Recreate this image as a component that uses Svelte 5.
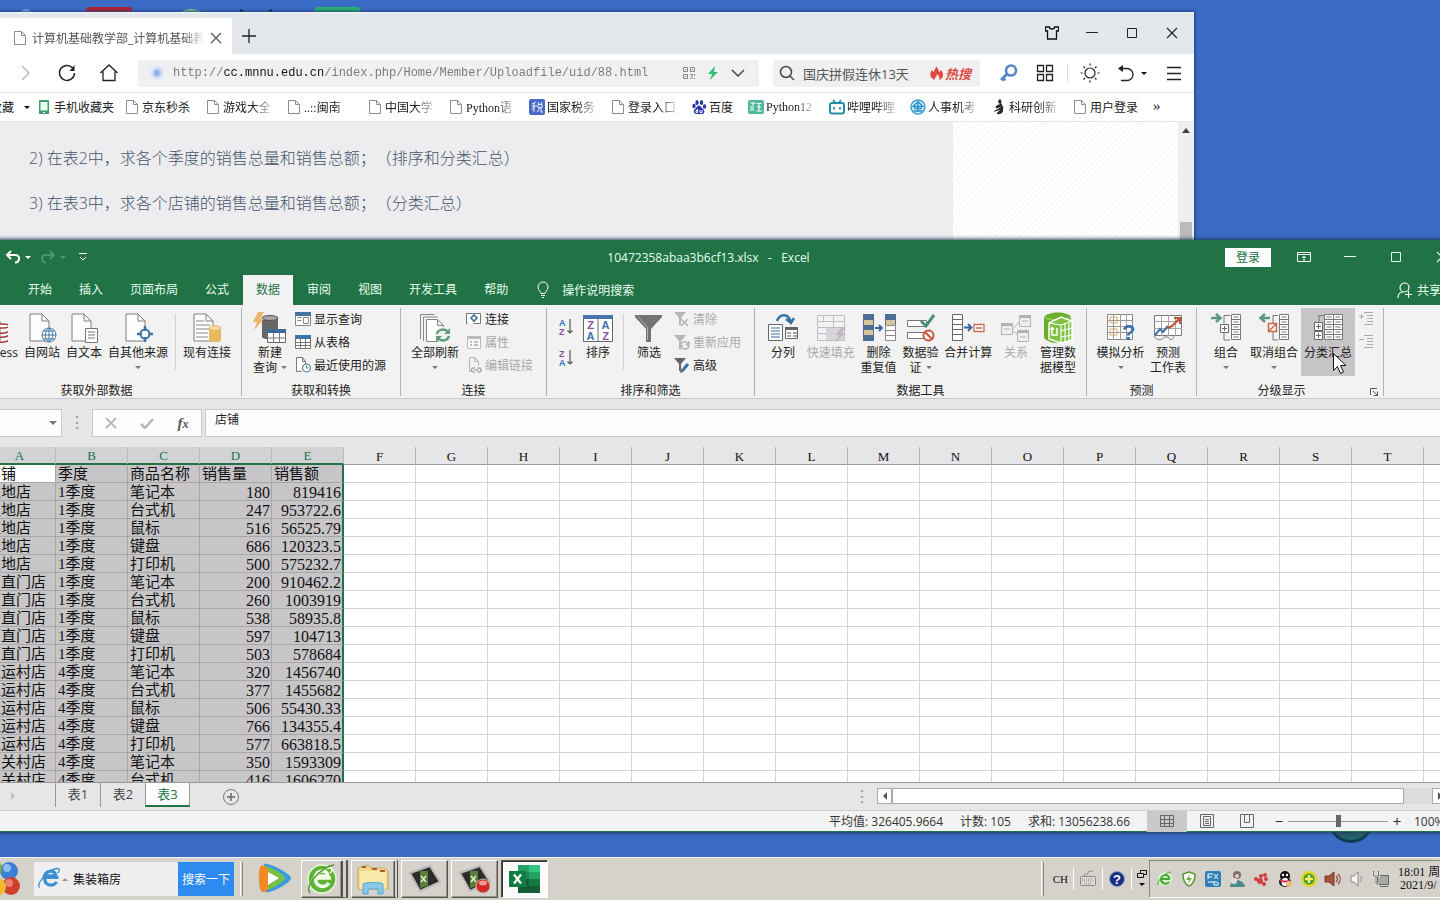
<script lang="ts">
  type Icon = { w: number; h: number; body: string };
  type Big = { icon: string; lines: string[]; drop?: boolean; off?: boolean; active?: boolean };
  type Small = { icon: string; label: string; off?: boolean };

  const page = (x = 0) =>
    `<path d="M${x + 1} 1h12l7 7v20h-19z" fill="#fdfdfd" stroke="#7f7f7f"/><path d="M${x + 13} 1v7h7" fill="none" stroke="#7f7f7f"/>`;
  const gridRows = (x: number) =>
    `<path d="M${x} 1.500h9v25h-9zM${x} 6.500h9M${x} 11.500h9M${x} 16.500h9M${x} 21.500h9" fill="#fff" stroke="#777"/><path d="M${x + 2} 4h5M${x + 2} 9h5M${x + 2} 14h5M${x + 2} 19h5M${x + 2} 24h5" stroke="#777"/>`;
  const ballE = (c: string) =>
    `<path d="M25 15H9c1-9 13-9 13-2H10M23 20c-4 6-15 4-13-6" fill="none" stroke="${c}" stroke-width="3.500"/><path d="M4 26C0 22 14 5 24 5c3 0 2 4 0 5" fill="none" stroke="${c}" stroke-width="1.500"/>`;

  const icons: Record<string, Icon> = {
    doc: { w: 16, h: 16, body: '<path d="M2.500 1.500h7l4 4v9h-11zM9.500 1.500v4h4" fill="#fff" stroke="#8d8d8d"/>' },
    phone: { w: 16, h: 16, body: '<rect x="3" y="1" width="10" height="14" rx="1" fill="#3f9d6b"/><path d="M4.500 3h7v8.500h-7z" fill="#e8fff3"/><path d="M7 13.500h2" stroke="#fff"/>' },
    tax: { w: 16, h: 16, body: '<rect width="16" height="16" rx="2" fill="#4a6bc4"/><path d="M3 5l4-2M5 4v9M2.500 7H8M5 8l-2 3M9 3l1 2M13 3l-1 2M9 5.500h4v3H9zM10 9v2l-2 2M12 9v4h2" fill="none" stroke="#e9efff"/>' },
    baidu: { w: 16, h: 16, body: '<g fill="#2b36a8"><ellipse cx="3" cy="7" rx="1.700" ry="2.300"/><ellipse cx="6" cy="3.500" rx="1.700" ry="2.500"/><ellipse cx="10.500" cy="3.500" rx="1.700" ry="2.500"/><ellipse cx="13.500" cy="7.500" rx="1.700" ry="2.300"/><path d="M8 6.500c-2 0-2.500 2.500-4.500 4-1.500 1.500-.5 4.500 2 4.500h5.500c2.500 0 3-3 1.500-4.500-2-1.500-2.500-4-4.500-4z"/></g><path d="M6.500 10v3.500H5v-2h1.500M9 11v2.500h2V11" fill="none" stroke="#fff"/>' },
    py: { w: 16, h: 16, body: '<rect y="1" width="16" height="14" rx="2" fill="#4db89c"/><path d="M2.500 4h5M5 4v8M8.500 4.500h5M8.500 12h5.500M11 5v7M9 8h4M3 7v5" fill="none" stroke="#fff"/>' },
    bili: { w: 16, h: 16, body: '<path d="M4 1l2.500 3M12 1L9.500 4" stroke="#1f8ea6" stroke-width="1.800"/><rect x="1" y="4" width="14" height="10.500" rx="2" fill="#fff" stroke="#1f8ea6" stroke-width="2"/><path d="M5 8v2.500M11 8v2.500" stroke="#1f8ea6" stroke-width="1.800"/>' },
    person: { w: 16, h: 16, body: '<circle cx="8" cy="8" r="7" fill="#d8f0fb" stroke="#3f9fd2" stroke-width="1.500"/><path d="M8 2.500L3 7.500h10zM4 9.500h8M3.500 12h9M8 4v9" fill="none" stroke="#2d8fc9" stroke-width="1.400"/>' },
    brush: { w: 16, h: 16, body: '<path d="M9 0c-3 2-2 4 0 5-3 1-5 2-4 4 2 1 3-1 5-1-2 2-6 2-7 5 3-1 4-2 6-2-2 2-3 2-3 4 4 1 7-2 6-5 1-2 0-3-1-3 1-2-1-2-1-3 1-2 0-3-1-4z" fill="#2a2a2a"/>' },
    forward: { w: 16, h: 16, body: '<path d="M5 1l7 7-7 7" fill="none" stroke="#bbb" stroke-width="1.500"/>' },
    refresh: { w: 18, h: 18, body: '<path d="M16.500 9a7.500 7.500 0 1 1-2-5.200" fill="none" stroke="#222" stroke-width="1.500"/><path d="M16.500 1v6h-5z" fill="#222"/>' },
    home: { w: 18, h: 18, body: '<path d="M.5 9L9 1l8.500 8M3 7.500v9h12v-9" fill="none" stroke="#222" stroke-width="1.300"/>' },
    site: { w: 16, h: 16, body: '<circle cx="8" cy="8" r="7" fill="#dbe6fa"/><circle cx="8" cy="8" r="4.500" fill="#b7cdf5"/><circle cx="8" cy="8" r="2.500" fill="#8caeea"/>' },
    qr: { w: 12, h: 12, body: '<path d="M.5.500h4v4h-4zM7.500.500h4v4h-4zM.5 7.500h4v4h-4zM2 2.500h1M9 2.500h1M2 9.500h1M7 7.500h3M9 7v5M11.500 7v2M7 11.500h1M11 11.500h1" fill="none" stroke="#888"/>' },
    bolt: { w: 12, h: 14, body: '<path d="M8 0L1 8h4L3 14l8-8H7z" fill="#35bd7d"/>' },
    chevron: { w: 14, h: 10, body: '<path d="M1 2l6 6 6-6" fill="none" stroke="#444" stroke-width="1.500"/>' },
    find: { w: 16, h: 16, body: '<circle cx="7" cy="7" r="5.500" fill="none" stroke="#444" stroke-width="1.500"/><path d="M11 11l4 4" stroke="#444" stroke-width="1.500"/>' },
    fire: { w: 14, h: 14, body: '<path d="M6 0c1 2 3 3 3 6 1 0 1-1 2-2 3 4 3 8-2 10 1-3 0-4-2-6 0 3-3 3-2 6C0 12-1 8 2 4c1 1 1 2 2 2 0-3 2-3 2-6z" fill="#e2463c"/>' },
    key: { w: 18, h: 18, body: '<circle cx="11" cy="6.500" r="5" fill="none" stroke="#5a86c8" stroke-width="2.600"/><path d="M7 10l-6 6M2.500 13.500l2.500 3" stroke="#5a86c8" stroke-width="3"/>' },
    apps: { w: 18, h: 18, body: '<path d="M1.500 1.500h6v6h-6zM10.500 1.500h6v6h-6zM1.500 10.500h6v6h-6zM10.500 10.500h6v6h-6z" fill="none" stroke="#222" stroke-width="1.300"/>' },
    sun: { w: 20, h: 20, body: '<circle cx="10" cy="10" r="5" fill="none" stroke="#222" stroke-width="1.200"/><path d="M10 .5v2M10 17.500v2M.5 10h2M17.500 10h2M3.500 3.500l1.500 1.500M15 15l1.500 1.500M3.500 16.500L5 15M15 5l1.500-1.500" stroke="#222" stroke-width="1.200"/>' },
    back: { w: 18, h: 18, body: '<path d="M2 4.500h8a6 6 0 0 1 0 12H4" fill="none" stroke="#222" stroke-width="1.300"/><path d="M1 4.500L6 1v7z" fill="#222"/>' },
    menu: { w: 16, h: 16, body: '<path d="M1 2.500h14M1 8.500h14M1 14.500h14" stroke="#222" stroke-width="1.300"/>' },
    shirt: { w: 14, h: 14, body: '<path d="M4.500 1h-4v4h2v8h9V5h2V1h-4c0 1-1 2-2.500 2S4.500 2 4.500 1z" fill="none" stroke="#111" stroke-width="1.300"/>' },
    min: { w: 12, h: 12, body: '<path d="M0 5.500h12" stroke="currentColor"/>' },
    max: { w: 12, h: 12, body: '<path d="M1.500 1.500h9v9h-9z" fill="none" stroke="currentColor"/>' },
    close: { w: 12, h: 12, body: '<path d="M1 1l10 10M11 1L1 11" stroke="currentColor" stroke-width="1.200"/>' },
    plus: { w: 14, h: 14, body: '<path d="M0 7h14M7 0v14" stroke="#222" stroke-width="1.300"/>' },

    undo: { w: 16, h: 14, body: '<path d="M2 5h8c6 0 5 7 0 7.500M6 1L2 5l4 4" fill="none" stroke="#fff" stroke-width="2"/>' },
    redo: { w: 16, h: 14, body: '<path d="M14 5H6C0 5 1 12 6 12.500M10 1l4 4-4 4" fill="none" stroke="#4f9570" stroke-width="2"/>' },
    customize: { w: 10, h: 10, body: '<path d="M1 1.500h8M2 5l3 3 3-3" fill="none" stroke="#fff"/>' },
    ribbonMode: { w: 14, h: 12, body: '<path d="M.5 1.500h13v9H.5zM.5 3.500h13M7 10V5M5 7l2-2 2 2" fill="none" stroke="#fff"/>' },
    bulb: { w: 12, h: 18, body: '<path d="M4 12.500c0-2-3-3-3-6.500a5 5 0 0 1 10 0c0 3.500-3 4.500-3 6.500zM4 14.500h4M5 16.500h2" fill="none" stroke="#fff"/>' },
    share: { w: 16, h: 16, body: '<circle cx="7.500" cy="5.500" r="4.500" fill="none" stroke="#fff" stroke-width="1.200"/><path d="M1 16c0-4 2-6 5-6M8 12.500h7M11.500 9v7" fill="none" stroke="#fff" stroke-width="1.200"/>' },

    access: { w: 32, h: 30, body: page(4) + '<ellipse cx="26" cy="13" rx="7" ry="2" fill="#fff" stroke="#a4373a" stroke-width="1.500"/><path d="M19 13v14c2 3 12 3 14 0V13M19 18c2 3 12 3 14 0M19 22c2 3 12 3 14 0" fill="none" stroke="#a4373a" stroke-width="1.500"/>' },
    web: { w: 32, h: 30, body: page(3) + '<circle cx="23" cy="22" r="7" fill="#fff" stroke="#3f76a8"/><path d="M16 22h14M17 18h12M17 26h12M23 15v14M23 15c-5 4-5 10 0 14M23 15c5 4 5 10 0 14" fill="none" stroke="#3f76a8"/>' },
    text: { w: 32, h: 30, body: page(3) + '<path d="M17.500 15.500h12v14h-12z" fill="#fff" stroke="#777"/><path d="M20 19h7M20 22h7M20 25h7" stroke="#777"/>' },
    other: { w: 32, h: 30, body: page(3) + '<circle cx="23" cy="21" r="4.500" fill="#fff" stroke="#4374a6" stroke-width="2"/><path d="M23 13v5M23 24v5M15 21h5M26 21h5" stroke="#4374a6" stroke-width="2.500"/>' },
    existing: { w: 32, h: 30, body: page(2) + '<path d="M5 8h8M5 12h14M5 16h13M5 20h12M5 24h12" stroke="#888"/><path d="M18 15v12c1 3 11 3 12 0V15z" fill="#e9b95d"/><ellipse cx="24" cy="15" rx="6" ry="2.200" fill="#f6dca6" stroke="#e9b95d"/>' },
    query: { w: 34, h: 32, body: '<path d="M9 6v19c0 3 16 3 16 0V6z" fill="#666"/><ellipse cx="17" cy="6" rx="8" ry="2.500" fill="#a5a5a5" stroke="#555"/><path d="M5 0h6L7 7h4L1 18l3-8H0z" fill="#eeb56b"/><path d="M14.500 17.500h18v13h-18z" fill="#fff" stroke="#666"/><path d="M14 17h19v4H14z" fill="#3e6a9c"/><path d="M14 26h19M20.500 21v10M26.500 21v10" stroke="#777"/>' },
    refreshAll: { w: 32, h: 30, body: '<path d="M1.500 26V1.500h14M4.500 28V4h14" fill="none" stroke="#888"/><path d="M7.500 6.500h11l6 6v16h-17zM18.500 6.500v6h6" fill="#fff" stroke="#888"/><circle cx="24" cy="22" r="8" fill="#f3f2f2"/><path d="M18 21c1-5 8-6 11-2M30 23c-1 5-8 6-11 2" fill="none" stroke="#5f9d7c" stroke-width="2.500"/><path d="M31 15v6h-6zM17 29v-6h6z" fill="#5f9d7c"/>' },
    sort: { w: 30, h: 28, body: '<path d="M.5 1.500h29v26H.5z" fill="#fff" stroke="#666"/><path d="M0 1h30v4H0z" fill="#4574ad"/><path d="M15 5v23" stroke="#666"/><g font-family="Liberation Sans" font-weight="bold" font-size="11" text-anchor="middle"><text x="7.500" y="15" fill="#8c4ea0">Z</text><text x="7.500" y="26" fill="#3a6fae">A</text><text x="22.500" y="15" fill="#3a6fae">A</text><text x="22.500" y="26" fill="#8c4ea0">Z</text></g>' },
    filter: { w: 30, h: 30, body: '<path d="M1 2h27v2L17 16v13h-5V16L1 4z" fill="#737373"/><path d="M4 3.500l9.500 11V27" fill="none" stroke="#b0b0b0"/>' },
    columns: { w: 32, h: 30, body: '<path d="M1.500 11.500h14v16h-14z" fill="#fff" stroke="#666"/><path d="M4 15h9M4 18h9M4 21h9M4 24h9" stroke="#3e6a9c"/><path d="M18.500 14.500h12v11h-12z" fill="#fff" stroke="#666"/><path d="M18 14h13v3H18z" fill="#666"/><path d="M20 20h4M20 23h4M26 20h4M26 23h4" stroke="#555"/><path d="M10 8c3-8 12-8 14 2M19 6l5 4 3-5" fill="none" stroke="#3d6fa8" stroke-width="2.500"/>' },
    flash: { w: 32, h: 30, body: '<path d="M2.500 2.500h27v25h-27zM2.500 8.500h27M2.500 14.500h27M2.500 20.500h10M8.500 2.500v6M18.500 2.500v12M11.500 14v13" fill="none" stroke="#c2bcc4"/><path d="M11 15h18v12H11z" fill="#d9d4da"/><path d="M27 14l-7 8h4l-4 8 10-10h-4l5-6z" fill="#bdb7be"/>' },
    dedupe: { w: 34, h: 30, body: '<path d="M1 1h11v27H1zM23 1h11v11H23z" fill="#4f6e94"/><path d="M2 7h9v5H2zM2 17h9v5H2zM24 7h9v5h-9z" fill="#d9c79a"/><path d="M23.500 12.500h10v15h-10zM23 17.500h11M23 22.500h11" fill="#fff" stroke="#888"/><path d="M13 15h7M17 12l3 3-3 3" fill="none" stroke="#35669f" stroke-width="1.800"/>' },
    validate: { w: 30, h: 30, body: '<path d="M1.500 7.500h19v6h-19zM1.500 19.500h19v6h-19z" fill="#fff" stroke="#777"/><path d="M15 8l5 5 8-11" fill="none" stroke="#4c9270" stroke-width="3"/><circle cx="22.500" cy="22.500" r="5" fill="#fff" stroke="#c8543b" stroke-width="2"/><path d="M19 19l7 7" stroke="#c8543b" stroke-width="2"/>' },
    merge: { w: 34, h: 30, body: '<path d="M1.500 1.500h10v26h-10zM1.500 6.500h10M1.500 11.500h10M1.500 16.500h10M1.500 21.500h10" fill="#fff" stroke="#666"/><path d="M13 14.500h7M17 11l3.500 3.500L17 18" fill="none" stroke="#35669f" stroke-width="1.800"/><path d="M23 11.500h10v7H23zM25 15h6" fill="#fff" stroke="#c97254" stroke-width="1.300"/>' },
    relation: { w: 32, h: 30, body: '<g fill="#f0eef0" stroke="#b5b0b7"><path d="M13 16l7-8M13 18l7 5" fill="none"/><path d="M1.500 10.500h11v11h-11zM19.500 2.500h11v11h-11zM17.500 17.500h11v11h-11z"/><path d="M2 12h10M20 4h10M18 19h10" stroke-width="2"/><path d="M4 16h6M22 8h6M20 24h6"/></g>' },
    model: { w: 30, h: 32, body: '<path d="M1 5c4-6 24-6 27 0v21c-8 7-22 6-27 0z" fill="#6cae2f"/><path d="M1 5c5 4 22 4 27 0" fill="none" stroke="#a9d67e"/><path d="M6 11l12-6 11 4v19l-11 3-12-4z" fill="#7fc141" stroke="#fff" stroke-width="1.500"/><path d="M6 11l12 2 11-4M18 13v18M22 12v18M26 11v17M18 19l11-3M18 25l11-2" fill="none" stroke="#fff" stroke-width="1.200"/><path d="M9 16v7h5v-7M7.500 18L9 15.500l2 2" fill="none" stroke="#fff" stroke-width="1.500"/>' },
    whatif: { w: 30, h: 30, body: '<path d="M1.500 1.500h25v25h-25z" fill="#fff" stroke="#888"/><path d="M1 7.500h26M1 13.500h26M1 19.500h26M7.500 1v26M14.500 1v26M20.500 1v26" stroke="#999"/><path d="M4 4h7v6H4zM4 16h7v6H4z" fill="none" stroke="#e0a56b"/><text x="16" y="27" font-family="Liberation Sans" font-weight="bold" font-size="22" fill="#3d6fa8">?</text>' },
    forecast: { w: 30, h: 30, body: '<path d="M1.500 2.500h27v20h-27z" fill="#fff" stroke="#777"/><path d="M1 8.500h28M1 15.500h28M8.500 2v21M15.500 2v21M22.500 2v21" stroke="#a5a5a5"/><path d="M2 22l5-6 3 3 5-6" fill="none" stroke="#3d6fa8" stroke-width="2"/><path d="M15 15l4-2 8-8M21 5h6v6" fill="none" stroke="#c0563e" stroke-width="2.200"/><path d="M1 23c2 5 8 5 10 1h4c2 4 5 3 6-1" fill="none" stroke="#888"/>' },
    group: { w: 32, h: 30, body: '<path d="M1 5h9M6 1l4.500 4L6 9" fill="none" stroke="#5d9a7c" stroke-width="2.500"/><path d="M20 2.500h-6v8M14 19v8h6" fill="none" stroke="#777"/><path d="M10.500 11.500h8v8h-8zM14.500 13v5M12 15.500h5" fill="#fff" stroke="#666"/>' + gridRows(21.5) },
    ungroup: { w: 32, h: 30, body: '<path d="M2 5h10M7 1L2.500 5 7 9" fill="none" stroke="#5d9a7c" stroke-width="2.500"/><path d="M20 2.500h-5v8M15 19v8h5" fill="none" stroke="#777"/><path d="M10.500 10.500h8v8h-8zM11 18l7-7" fill="#fff" stroke="#cc6547" stroke-width="1.500"/>' + gridRows(21.5) },
    subtotal: { w: 32, h: 30, body: '<path d="M16 2.500H7v7" fill="none" stroke="#777"/><path d="M2.500 9.500h8v8h-8zM2.500 18.500h8v8h-8zM6.500 11v5M4 13.500h5M6.500 20v5M4 22.500h5" fill="#fff" stroke="#666"/>' + gridRows(12.5) + gridRows(21.5) },

    showQuery: { w: 16, h: 16, body: '<path d="M.5 1.500h15v13H.5zM8.500 6.500h5v6h-5zM2.500 6.500h4M2.500 9.500h4" fill="#fff" stroke="#888"/><path d="M0 1h16v4H0z" fill="#4574a0"/>' },
    fromTable: { w: 16, h: 16, body: '<path d="M.5 1.500h15v13H.5zM0 8.500h16M0 11.500h16M5.500 4v11M10.500 4v11" fill="#fff" stroke="#777"/><path d="M0 1h16v4H0z" fill="#4574a0"/>' },
    recent: { w: 16, h: 16, body: '<path d="M1.500 14.500v-14h6l3 4v3M7.500.5v4h3M1.500 14.500h5" fill="#fff" stroke="#777"/><circle cx="11.500" cy="11" r="4" fill="#fff" stroke="#3f6c9c"/><path d="M11.500 8.500V11h2" fill="none" stroke="#3f6c9c"/>' },
    link: { w: 16, h: 16, body: '<path d="M1.500 12.500h-1v-10h14v10h-7" fill="#fff" stroke="#777"/><path d="M8 4l3 3-3 3-3-3z" fill="#fff" stroke="#3f6c9c" stroke-width="1.600"/>' },
    props: { w: 16, h: 16, body: '<path d="M1.500 2.500h13v12h-13z" fill="#f8f7f8" stroke="#bbb"/><path d="M1 2h14v3H1z" fill="#bbb"/><path d="M4 8h2M4 11h2M8 8h4M8 11h4" stroke="#aaa" stroke-width="1.500"/>' },
    editLink: { w: 16, h: 16, body: '<path d="M5 14.500H3.500V.5h5l4 4V9M8.500.5v4h4" fill="none" stroke="#b5b2b7"/><path d="M9 11H7.500a2 2 0 0 0 0 4H9M11.500 11H13a2 2 0 0 1 0 4h-1.500M8.500 13h4" fill="none" stroke="#aaa" stroke-width="1.500"/>' },
    clear: { w: 16, h: 16, body: '<path d="M0 1h12L7 7v7H5V7z" fill="#b8b5ba"/><path d="M7 8l7 7M14 8l-7 7" stroke="#b5b2b7" stroke-width="1.500"/>' },
    reapply: { w: 16, h: 16, body: '<path d="M0 1h12L7 7v7H5V7z" fill="#b8b5ba"/><path d="M6.500 11c1-4 6-4 7.500-1M15 12c-1 4-6 4-7.500 1M15 7v4h-3M6 16v-4h3" fill="none" stroke="#b5b2b7" stroke-width="1.500"/>' },
    advanced: { w: 16, h: 16, body: '<path d="M0 1h12L7 7v7H5V7z" fill="#666"/><path d="M8 14l6-7" stroke="#3d6fa8" stroke-width="3"/><path d="M6 16l1-3 2 2z" fill="#555"/>' },
    asc: { w: 16, h: 20, body: '<g font-family="Liberation Sans" font-weight="bold" font-size="9"><text x="1" y="9" fill="#3a6fae">A</text><text x="1" y="18" fill="#8c4ea0">Z</text></g><path d="M12 2v14M9.500 13.500L12 16l2.500-2.500" fill="none" stroke="#555" stroke-width="1.200"/>' },
    desc: { w: 16, h: 20, body: '<g font-family="Liberation Sans" font-weight="bold" font-size="9"><text x="1" y="9" fill="#8c4ea0">Z</text><text x="1" y="18" fill="#3a6fae">A</text></g><path d="M12 2v14M9.500 13.500L12 16l2.500-2.500" fill="none" stroke="#555" stroke-width="1.200"/>' },
    showDetail: { w: 16, h: 16, body: '<path d="M1 5.500h5M3.500 3v5M6 1.500h9M9 4.500h6M9 7.500h6M9 10.500h6M6 13.500h9" stroke="#aaa" fill="none"/>' },
    hideDetail: { w: 16, h: 16, body: '<path d="M1 5.500h5M6 1.500h9M9 4.500h6M9 7.500h6M9 10.500h6M6 13.500h9" stroke="#aaa" fill="none"/>' },
    launcher: { w: 8, h: 8, body: '<path d="M.5 7V.5H7M3 3l4 4M7.500 3.500v4h-4" fill="none" stroke="#555"/>' },

    cancel: { w: 12, h: 12, body: '<path d="M1 1l10 10M11 1L1 11" stroke="#b8b8b8" stroke-width="1.800"/>' },
    accept: { w: 14, h: 12, body: '<path d="M1 7l4 4 8-9" fill="none" stroke="#b8b8b8" stroke-width="2.500"/>' },
    add: { w: 16, h: 16, body: '<circle cx="8" cy="8" r="7.500" fill="none" stroke="#777"/><path d="M4 8h8M8 4v8" stroke="#666" stroke-width="1.500"/>' },
    viewNormal: { w: 14, h: 14, body: '<path d="M.5 1.500h13v11H.5zM4.500 1v12M9.500 1v12M0 5.500h14M0 9.500h14" fill="none" stroke="#666"/>' },
    viewPage: { w: 14, h: 14, body: '<path d="M.5.500h13v13H.5zM3.500 2.500h7v9h-7zM5 5.500h4M5 7.500h4M5 9.500h4" fill="none" stroke="#666"/>' },
    viewBreak: { w: 14, h: 14, body: '<path d="M.5.500h13v13H.5zM4.500.500v8h5M9.500.500v8" fill="none" stroke="#666"/>' },

    ie: { w: 24, h: 24, body: '<g transform="translate(-2 -3) scale(.9)">' + ballE('#3b8fd0') + '</g>' },
    start: { w: 40, h: 36, body: '<path d="M4 14C8 2 16 3 20 8l-4 9c-4-3-8-3-12-3z" fill="#e0622f"/><circle cx="29" cy="10" r="9" fill="#3a7fd8"/><circle cx="31" cy="25" r="9" fill="#d0402c"/><circle cx="17" cy="26" r="9" fill="#f1b92c"/><path d="M18 0c6 4 4 12 0 17-4-3-4-11 0-17z" fill="#78b43c"/><circle cx="27" cy="7" r="4" fill="#8fbdf2"/><circle cx="29" cy="22" r="4" fill="#e98473"/>' },
    player: { w: 34, h: 32, body: '<path d="M6 1c4-2 26 9 27 14 0 5-21 16-25 14z" fill="#3b9be0"/><path d="M3 3c4-2 23 7 24 12 0 4-18 14-21 12z" fill="#79c143"/><path d="M3 3C0 5 0 26 4 29c5 1 7-4 7-14S8 1 3 3z" fill="#f08a24"/><path d="M10 9l11 6-11 7z" fill="#fff"/>' },
    green360: { w: 32, h: 32, body: '<circle cx="16" cy="16" r="14" fill="#5fb336" stroke="#e6f6da" stroke-width="1.500"/><g>' + ballE('#f2ffe9') + '</g><path d="M4 30c-6-8 12-26 24-28" fill="none" stroke="#4b9a2a" stroke-width="1.500"/>' },
    folder: { w: 34, h: 32, body: '<path d="M2 5l10-3 3 3h14l3 3v18H2z" fill="#f0d98c" stroke="#c9ac5a"/><path d="M4 8h26v18H4z" fill="#f9eaa9"/><path d="M6 4h4M16 6h5M24 8h5" stroke="#b5573a" stroke-width="2"/><path d="M7 31V21c0-2 20-2 20 0v10h-5v-5H12v5z" fill="#86c9ea" stroke="#5aa5cc"/>' },
    recorder: { w: 34, h: 32, body: '<path d="M2 10l20-7 10 16-20 9z" fill="#2c2d2a" stroke="#b9b9b9" stroke-width="2"/><path d="M12 8h8v15l-8 2z" fill="#5d7d3c"/><path d="M13 13l5 6M18 13l-5 6" stroke="#dfeccf" stroke-width="1.500"/>' },
    recording: { w: 34, h: 32, body: '<path d="M2 10l20-7 10 16-20 9z" fill="#2c2d2a" stroke="#b9b9b9" stroke-width="2"/><path d="M12 8h8v15l-8 2z" fill="#5d7d3c"/><path d="M13 13l5 6M18 13l-5 6" stroke="#dfeccf" stroke-width="1.500"/><circle cx="25" cy="23" r="7" fill="#d32a20" stroke="#bbb"/><ellipse cx="25" cy="20" rx="4" ry="2.500" fill="#f29a92"/>' },
    excel: { w: 34, h: 30, body: '<path d="M10 1h22v28H10z" fill="#1f8a50"/><path d="M21 1h11v7H21z" fill="#33c481"/><path d="M10 1h11v7H10zM21 8h11v7H21z" fill="#21a366"/><path d="M21 15h11v7H21z" fill="#107c41"/><path d="M10 15h11v14H10zM21 22h11v7H21z" fill="#185c37"/><path d="M1 7h17v16H1z" fill="#107c41"/><path d="M6 10.500l7 9M13 10.500l-7 9" stroke="#fff" stroke-width="2.200"/>' },

    keyboard: { w: 18, h: 18, body: '<path d="M5 6c0-4 4 0 4-3s3-1 5-2" fill="none" stroke="#888"/><rect x="1.500" y="6.500" width="15" height="9" rx="1" fill="#ddd" stroke="#888"/><path d="M3 9h12M3 11h12M5 13.500h8" stroke="#888" stroke-dasharray="1 1"/>' },
    help: { w: 18, h: 18, body: '<circle cx="9" cy="9" r="7.500" fill="#17307f" stroke="#8c9cc9"/><text x="9" y="14" text-anchor="middle" font-family="Liberation Sans" font-weight="bold" font-size="13" fill="#fff">?</text>' },
    restore: { w: 10, h: 18, body: '<path d="M3.500 3V.5h6v4H7M.5 3.500h6v4h-6z" fill="none" stroke="#111"/><path d="M2 13h6l-3 3z" fill="#111"/>' },
    tray0: { w: 18, h: 18, body: '<circle cx="9" cy="9" r="7" fill="#d9f2c8"/><path d="M14 9H5c1-5 8-5 8-1M13 12c-2 3-8 2-8-3" fill="none" stroke="#48a83a" stroke-width="2"/><path d="M2 15C0 12 9 2 15 2" fill="none" stroke="#48a83a"/>' },
    tray1: { w: 18, h: 18, body: '<path d="M9 2l6 2c0 6-1 10-6 12C4 14 3 10 3 4z" fill="#fff" stroke="#5f9431" stroke-width="1.500"/><path d="M10 4L6 10h3l-1 4 4-6H9z" fill="#6fae35"/>' },
    tray2: { w: 18, h: 18, body: '<rect x="1" y="1" width="16" height="16" rx="2" fill="#2f82b8"/><path d="M4 4h5M4 4v5M4 7h4M10 4l4 5M14 4l-4 5M4 12h9M10 12v3h4v-3" fill="none" stroke="#fff"/>' },
    tray3: { w: 18, h: 18, body: '<circle cx="9" cy="5" r="4" fill="#7d7269"/><path d="M2 17c0-9 14-9 15 0z" fill="#4b8c84"/><circle cx="9" cy="6" r="2" fill="#e8cdb5"/><circle cx="6" cy="11" r="3" fill="#ddd"/>' },
    tray4: { w: 18, h: 18, body: '<g fill="#cf3d3d"><circle cx="4" cy="9" r="2"/><circle cx="9" cy="6" r="2"/><circle cx="8" cy="11" r="3"/><circle cx="13" cy="5" r="2"/><circle cx="14" cy="9" r="2"/><circle cx="12" cy="14" r="2"/></g>' },
    tray5: { w: 18, h: 18, body: '<ellipse cx="9" cy="6" rx="5" ry="5" fill="#111"/><ellipse cx="9" cy="12" rx="6" ry="5" fill="#222"/><ellipse cx="9" cy="12" rx="3.500" ry="4" fill="#fff"/><path d="M4 9c3 2 7 2 10 0v2c-3 2-7 2-10 0z" fill="#d3294b"/><circle cx="7" cy="5" r="1.200" fill="#fff"/><circle cx="11" cy="5" r="1.200" fill="#fff"/><circle cx="13" cy="14" r="3" fill="#eeb878"/>' },
    tray6: { w: 18, h: 18, body: '<circle cx="9" cy="9" r="8" fill="#e5d622"/><circle cx="9" cy="9" r="5.500" fill="#3c9a3a"/><path d="M9 5v8M5 9h8" stroke="#fff066" stroke-width="2.500"/>' },
    tray7: { w: 18, h: 18, body: '<path d="M1 6h4l5-4v14l-5-4H1z" fill="#a8533d" stroke="#7a3626"/><path d="M12 6c2 2 2 4 0 6M14 4c3 3 3 7 0 10" fill="none" stroke="#9a3d2e" stroke-width="1.200"/>' },
    tray8: { w: 18, h: 18, body: '<path d="M3 6h3l4-4v14l-4-4H3z" fill="#f4f4f4" stroke="#888"/><path d="M12 6c2 2 2 4 0 6" fill="none" stroke="#888"/>' },
    tray9: { w: 18, h: 18, body: '<path d="M5.500 5.500h11v9h-11zM8 16.500h8" fill="#aaa" stroke="#666"/><path d="M1.500 2v4h5V2M4 6v8h3" fill="none" stroke="#fff" stroke-width="2"/><path d="M1.500 1v5h5V1M4 6v8h3" fill="none" stroke="#666"/>' },
  };

  const bookmarks = [
    { icon: 'doc', label: '京东秒杀' },
    { icon: 'doc', label: '游戏大全', fade: true },
    { icon: 'doc', label: '..::闽南', fade: true },
    { icon: 'doc', label: '中国大学', fade: true },
    { icon: 'doc', label: 'Python语', fade: true },
    { icon: 'tax', label: '国家税务', fade: true },
    { icon: 'doc', label: '登录入口', fade: true },
    { icon: 'baidu', label: '百度', short: true },
    { icon: 'py', label: 'Python12', fade: true },
    { icon: 'bili', label: '哔哩哔哩', fade: true },
    { icon: 'person', label: '人事机考', fade: true },
    { icon: 'brush', label: '科研创新', fade: true },
    { icon: 'doc', label: '用户登录' },
  ];

  const tabs = ['开始', '插入', '页面布局', '公式', '数据', '审阅', '视图', '开发工具', '帮助'];

  const external: Big[] = [
    { icon: 'access', lines: ['自 Access'] },
    { icon: 'web', lines: ['自网站'] },
    { icon: 'text', lines: ['自文本'] },
    { icon: 'other', lines: ['自其他来源'], drop: true },
  ];
  const transform: Small[] = [
    { icon: 'showQuery', label: '显示查询' },
    { icon: 'fromTable', label: '从表格' },
    { icon: 'recent', label: '最近使用的源' },
  ];
  const connections: Small[] = [
    { icon: 'link', label: '连接' },
    { icon: 'props', label: '属性', off: true },
    { icon: 'editLink', label: '编辑链接', off: true },
  ];
  const filters: Small[] = [
    { icon: 'clear', label: '清除', off: true },
    { icon: 'reapply', label: '重新应用', off: true },
    { icon: 'advanced', label: '高级' },
  ];
  const tools: Big[] = [
    { icon: 'columns', lines: ['分列'] },
    { icon: 'flash', lines: ['快速填充'], off: true },
    { icon: 'dedupe', lines: ['删除', '重复值'] },
    { icon: 'validate', lines: ['数据验', '证'], drop: true },
    { icon: 'merge', lines: ['合并计算'] },
    { icon: 'relation', lines: ['关系'], off: true },
    { icon: 'model', lines: ['管理数', '据模型'] },
  ];
  const forecast: Big[] = [
    { icon: 'whatif', lines: ['模拟分析'], drop: true },
    { icon: 'forecast', lines: ['预测', '工作表'] },
  ];
  const outline: Big[] = [
    { icon: 'group', lines: ['组合'], drop: true },
    { icon: 'ungroup', lines: ['取消组合'], drop: true },
    { icon: 'subtotal', lines: ['分类汇总'], active: true },
  ];

  const columns = 'ABCDEFGHIJKLMNOPQRSTU'.split('');
  const header = ['店铺', '季度', '商品名称', '销售量', '销售额'];
  const rows = [
    ['上地店', '1季度', '笔记本', '180', '819416'],
    ['上地店', '1季度', '台式机', '247', '953722.6'],
    ['上地店', '1季度', '鼠标', '516', '56525.79'],
    ['上地店', '1季度', '键盘', '686', '120323.5'],
    ['上地店', '1季度', '打印机', '500', '575232.7'],
    ['西直门店', '1季度', '笔记本', '200', '910462.2'],
    ['西直门店', '1季度', '台式机', '260', '1003919'],
    ['西直门店', '1季度', '鼠标', '538', '58935.8'],
    ['西直门店', '1季度', '键盘', '597', '104713'],
    ['西直门店', '1季度', '打印机', '503', '578684'],
    ['亚运村店', '4季度', '笔记本', '320', '1456740'],
    ['亚运村店', '4季度', '台式机', '377', '1455682'],
    ['亚运村店', '4季度', '鼠标', '506', '55430.33'],
    ['亚运村店', '4季度', '键盘', '766', '134355.4'],
    ['亚运村店', '4季度', '打印机', '577', '663818.5'],
    ['中关村店', '4季度', '笔记本', '350', '1593309'],
    ['中关村店', '4季度', '台式机', '416', '1606270'],
  ];
  const sheet = [header, ...rows];
  const sheets = ['表1', '表2', '表3'];

  let activeTab = $state('数据');
  let activeSheet = $state('表3');
  let url = $state('http://cc.mnnu.edu.cn/index.php/Home/Member/Uploadfile/uid/88.html');
  let hotQuery = $state('国庆拼假连休13天');
  let formula = $state('店铺');
  let keyword = $state('集装箱房');
  let zoom = $state(50);
</script>

{#snippet icon(name: string)}
  {@const i = icons[name]}
  <svg width={i.w} height={i.h} viewBox="0 0 {i.w} {i.h}" aria-hidden="true">{@html i.body}</svg>
{/snippet}

{#snippet big(b: Big)}
  <button class="big" class:off={b.off} class:active={b.active}>
    <span class="pic">{@render icon(b.icon)}</span>
    <span class="line">{b.lines[0]}</span>
    {#if b.lines[1] || b.drop}
      <span class="line">{b.lines[1] ?? ''}{#if b.drop}<i class="caret"></i>{/if}</span>
    {/if}
    {#if b.active}
      <svg class="cursor" width="16" height="24" viewBox="0 0 16 24" aria-hidden="true">
        <path d="M1.500 1.500v17l4-4 3 7 3-1.500-3-6.500h5.500z" fill="#fff" stroke="#111" />
      </svg>
    {/if}
  </button>
{/snippet}

{#snippet smalls(list: Small[])}
  <div class="smalls">
    {#each list as s}
      <button class="small" class:off={s.off}>{@render icon(s.icon)}<span>{s.label}</span></button>
    {/each}
  </div>
{/snippet}

<div class="desktop">
  <div class="shortcuts">
    <i class="sc ball"></i><i class="sc red"></i><i class="sc leaf"></i><i class="sc dark"></i><i class="sc green"></i>
  </div>
  <i class="orb"></i>

  <section class="browser">
    <header class="strip">
      <div class="page-tab">
        {@render icon('doc')}
        <span class="page-title">计算机基础教学部_计算机基础教</span>
        <button aria-label="关闭标签">{@render icon('close')}</button>
      </div>
      <button class="new-tab" aria-label="新标签">{@render icon('plus')}</button>
      <div class="win-buttons">
        <button aria-label="皮肤">{@render icon('shirt')}</button>
        <button aria-label="最小化">{@render icon('min')}</button>
        <button aria-label="最大化">{@render icon('max')}</button>
        <button aria-label="关闭">{@render icon('close')}</button>
      </div>
    </header>

    <div class="toolbar">
      <button class="nav" aria-label="前进">{@render icon('forward')}</button>
      <button class="nav" aria-label="刷新">{@render icon('refresh')}</button>
      <button class="nav" aria-label="主页">{@render icon('home')}</button>
      <div class="field address">
        {@render icon('site')}
        <input class="url" aria-label="地址" bind:value={url} spellcheck="false" />
        {@render icon('qr')}
        {@render icon('bolt')}
        {@render icon('chevron')}
      </div>
      <div class="field search">
        {@render icon('find')}
        <input class="hot" aria-label="搜索" bind:value={hotQuery} />
        {@render icon('fire')}
        <b>热搜</b>
      </div>
      <div class="tools">
        <button aria-label="密码">{@render icon('key')}</button>
        <button aria-label="应用">{@render icon('apps')}</button>
        <i class="rule"></i>
        <button aria-label="亮度">{@render icon('sun')}</button>
        <button aria-label="恢复">{@render icon('back')}<i class="caret black"></i></button>
        <button aria-label="菜单">{@render icon('menu')}</button>
      </div>
    </div>

    <nav class="bookmarks">
      <a href="#fav" class="fav">收藏<i class="caret black"></i></a>
      <a href="#phone" class="bm">{@render icon('phone')}<span>手机收藏夹</span></a>
      <div class="bm-list">
        {#each bookmarks as b}
          <a href="#bm" class="bm">
            {@render icon(b.icon)}<span class="bm-text" class:fade={b.fade} class:short={b.short}>{b.label}</span>
          </a>
        {/each}
        <span class="more">»</span>
      </div>
    </nav>

    <div class="content">
      <main class="article">
        <p>2) 在表2中，求各个季度的销售总量和销售总额；（排序和分类汇总）</p>
        <p>3) 在表3中，求各个店铺的销售总量和销售总额；（分类汇总）</p>
      </main>
      <aside class="hatch"></aside>
      <div class="scroll"><i class="up"></i><i class="thumb"></i></div>
    </div>
  </section>

  <section class="excel">
    <header class="title">
      <div class="quick">
        <button aria-label="撤消">{@render icon('undo')}<i class="caret light"></i></button>
        <button aria-label="恢复">{@render icon('redo')}<i class="caret dim"></i></button>
        <button aria-label="自定义快速访问工具栏">{@render icon('customize')}</button>
      </div>
      <h1>10472358abaa3b6cf13.xlsx&nbsp; &nbsp;-&nbsp; &nbsp;Excel</h1>
      <div class="title-right">
        <button class="login">登录</button>
        <button class="wb" aria-label="功能区显示选项">{@render icon('ribbonMode')}</button>
        <button class="wb" aria-label="最小化">{@render icon('min')}</button>
        <button class="wb" aria-label="最大化">{@render icon('max')}</button>
        <button class="wb" aria-label="关闭">{@render icon('close')}</button>
      </div>
    </header>

    <nav class="tabs">
      {#each tabs as t}
        <button class="tab" class:on={t === activeTab} onclick={() => (activeTab = t)}>{t}</button>
      {/each}
      <button class="tell">{@render icon('bulb')}操作说明搜索</button>
      <button class="share">{@render icon('share')}共享</button>
    </nav>

    <div class="ribbon">
      <div class="grp g-external">
        <div class="items">
          {#each external as b}{@render big(b)}{/each}
          <i class="split"></i>
          {@render big({ icon: 'existing', lines: ['现有连接'] })}
        </div>
        <div class="name">获取外部数据</div>
      </div>
      <div class="grp g-transform">
        <div class="items">
          {@render big({ icon: 'query', lines: ['新建', '查询'], drop: true })}
          {@render smalls(transform)}
        </div>
        <div class="name">获取和转换</div>
      </div>
      <div class="grp g-links">
        <div class="items">
          {@render big({ icon: 'refreshAll', lines: ['全部刷新'], drop: true })}
          {@render smalls(connections)}
        </div>
        <div class="name">连接</div>
      </div>
      <div class="grp g-sort">
        <div class="items">
          <div class="az">
            <button aria-label="升序">{@render icon('asc')}</button>
            <button aria-label="降序">{@render icon('desc')}</button>
          </div>
          {@render big({ icon: 'sort', lines: ['排序'] })}
          <i class="split"></i>
          {@render big({ icon: 'filter', lines: ['筛选'] })}
          {@render smalls(filters)}
        </div>
        <div class="name">排序和筛选</div>
      </div>
      <div class="grp g-tools">
        <div class="items">{#each tools as b}{@render big(b)}{/each}</div>
        <div class="name">数据工具</div>
      </div>
      <div class="grp g-forecast">
        <div class="items">{#each forecast as b}{@render big(b)}{/each}</div>
        <div class="name">预测</div>
      </div>
      <div class="grp g-outline">
        <div class="items">
          {#each outline as b}{@render big(b)}{/each}
          <div class="details">
            <button aria-label="显示明细数据">{@render icon('showDetail')}</button>
            <button aria-label="隐藏明细数据">{@render icon('hideDetail')}</button>
          </div>
        </div>
        <div class="name">
          <span>分级显示</span>
          <button aria-label="分级显示设置">{@render icon('launcher')}</button>
        </div>
      </div>
    </div>

    <div class="formula-row">
      <div class="name-box">
        <input aria-label="名称框" />
        <button aria-label="名称列表"><i class="caret"></i></button>
      </div>
      <span class="dots">⋮</span>
      <div class="fx-box">
        <button aria-label="取消">{@render icon('cancel')}</button>
        <button aria-label="输入">{@render icon('accept')}</button>
        <button class="fx" aria-label="插入函数">f<small>x</small></button>
      </div>
      <input class="formula" aria-label="编辑栏" bind:value={formula} />
    </div>

    <div class="sheet">
      <table>
        <colgroup>
          <col class="rowhead" />
          {#each columns as _}<col class="data" />{/each}
        </colgroup>
        <thead>
          <tr>
            <th></th>
            {#each columns as c, i}<th class:sel={i < 5}>{c}</th>{/each}
          </tr>
        </thead>
        <tbody>
          {#each sheet as row, r}
            <tr>
              <th></th>
              {#each columns as _, c}
                <td class:sel={c < 5} class:first={r === 0 && c === 0} class:edge={c === 4} class:num={r > 0 && c > 2}>{row[c] ?? ''}</td>
              {/each}
            </tr>
          {/each}
        </tbody>
      </table>
    </div>

    <div class="sheet-bar">
      <i class="nav-next"></i>
      <div class="sheet-tabs">
        {#each sheets as s}
          <button class:on={s === activeSheet} onclick={() => (activeSheet = s)}>{s}</button>
        {/each}
      </div>
      <button class="add" aria-label="新工作表">{@render icon('add')}</button>
      <span class="dots">⋮</span>
      <div class="hscroll">
        <button aria-label="向左"><i class="tri left"></i></button>
        <i class="hthumb"></i>
        <i class="trough"></i>
        <button aria-label="向右"><i class="tri right"></i></button>
      </div>
    </div>

    <footer class="status">
      <span>平均值: 326405.9664</span>
      <span>计数: 105</span>
      <span>求和: 13056238.66</span>
      <div class="views">
        <button class="on" aria-label="普通">{@render icon('viewNormal')}</button>
        <button aria-label="页面布局">{@render icon('viewPage')}</button>
        <button aria-label="分页预览">{@render icon('viewBreak')}</button>
      </div>
      <div class="zoom">
        <button aria-label="缩小">−</button>
        <input type="range" min="0" max="100" bind:value={zoom} aria-label="显示比例" />
        <button aria-label="放大">+</button>
        <span class="pct">100%</span>
      </div>
    </footer>
  </section>

  <footer class="taskbar">
    <button class="start" aria-label="开始">{@render icon('start')}</button>
    <form class="task-search">
      {@render icon('ie')}<i class="tri up-small"></i>
      <input aria-label="关键词" bind:value={keyword} />
      <button type="button">搜索一下</button>
    </form>
    <i class="groove"></i>
    <button class="launch" aria-label="播放器">{@render icon('player')}</button>
    <div class="tasks">
      <button class="stack2" aria-label="浏览器">{@render icon('green360')}</button>
      <button class="stack1" aria-label="文件夹">{@render icon('folder')}</button>
      <button aria-label="录屏">{@render icon('recorder')}</button>
      <button aria-label="正在录制">{@render icon('recording')}</button>
      <button class="on" aria-label="Excel">{@render icon('excel')}</button>
    </div>
    <div class="lang">
      <i class="groove"></i>
      <span>CH</span>
      <i class="thin"></i>
      {@render icon('keyboard')}
      <i class="thin"></i>
      {@render icon('help')}
      <i class="thin"></i>
      {@render icon('restore')}
    </div>
    <div class="tray">
      {#each Array(10) as _, i}{@render icon('tray' + i)}{/each}
      <div class="clock"><span>18:01 周</span><span>2021/9/</span></div>
    </div>
  </footer>
</div>

<style>
  :global(body) {
    margin: 0;
    overflow: hidden;
  }

  .desktop {
    position: relative;
    height: 100vh;
    overflow: hidden;
    background: #3b6cc5;
    font-family: 'Open Sans', 'Noto Sans CJK SC', sans-serif;
    font-size: 12px;
    color: #222;
  }

  .desktop * {
    box-sizing: border-box;
  }

  button {
    display: flex;
    align-items: center;
    justify-content: center;
    padding: 0;
    border: 0;
    background: none;
    font: inherit;
    color: inherit;
    white-space: nowrap;
  }

  input {
    min-width: 0;
    padding: 0;
    border: 0;
    outline: 0;
    background: none;
    font: inherit;
    color: inherit;
  }

  svg {
    display: block;
    flex: none;
  }

  a {
    color: inherit;
    text-decoration: none;
  }

  .caret {
    display: inline-block;
    flex: none;
    border: 3px solid transparent;
    border-top-color: #777;
    border-bottom: 0;
  }

  .caret.black { border-top-color: #111; }
  .caret.light { border-top-color: #fff; }
  .caret.dim { border-top-color: #4f9570; }

  /* desktop leftovers behind the windows */
  .shortcuts {
    position: absolute;
    top: 7px;
    left: 18px;
    display: flex;
    align-items: flex-start;
  }

  .sc { height: 20px; }
  .ball { width: 16px; margin: 2px 52px 0 0; border-radius: 50%; background: #7fb9ee; }
  .red { width: 46px; margin-right: 45px; border-radius: 3px; background: #b3202c; }
  .leaf { width: 28px; margin: 2px 35px 0 0; border-radius: 50%; background: #8fd08a; }
  .dark { width: 32px; margin: 2px 42px 0 0; border: 3px solid #1c2f55; border-width: 0 3px; }
  .green { width: 47px; border-radius: 5px; background: #2ab868; }

  .orb {
    position: absolute;
    right: 66px;
    bottom: 57px;
    width: 46px;
    height: 46px;
    border: 3px solid #123a55;
    border-radius: 50%;
    background: #25606e;
  }

  /* browser */
  .browser {
    position: absolute;
    top: 12px;
    left: -40px;
    right: 246px;
    bottom: 400px;
    display: flex;
    flex-direction: column;
    background: #fff;
    border-top: 1px solid #f0f4fb;
    box-shadow: 0 0 3px 1px #1f3f7d;
  }

  .strip {
    display: flex;
    height: 41px;
    padding: 5px 2px 0 40px;
    background: #e3e6eb;
  }

  .page-tab {
    display: flex;
    align-items: center;
    width: 232px;
    padding: 4px 10px 0 12px;
    background: #fff;
    color: #555;
  }

  .page-title {
    flex: 1;
    margin-left: 4px;
    overflow: hidden;
    white-space: nowrap;
    mask-image: linear-gradient(90deg, #000 152px, transparent 172px);
  }

  .page-tab button { width: 12px; }
  .new-tab { width: 34px; }

  .win-buttons {
    display: flex;
    margin-left: auto;
    padding-bottom: 6px;
  }

  .win-buttons button { width: 40px; }

  .toolbar {
    display: flex;
    align-items: center;
    height: 39px;
    padding: 0 2px 0 44px;
    border-bottom: 1px solid #e4e4e6;
  }

  .nav { width: 42px; }

  .field {
    display: flex;
    align-items: center;
    height: 27px;
    border-radius: 3px;
    background: #f0f0f3;
  }

  .address {
    flex: 1;
    gap: 12px;
    margin-left: 8px;
    padding: 0 14px 0 11px;
  }

  .url {
    flex: 1;
    margin-left: -4px;
    font: 12px 'Liberation Mono', monospace;
    color: transparent;
    background: linear-gradient(90deg, #777 50px, #111 50px 151px, #777 151px);
    background-clip: text;
  }

  .search {
    width: 207px;
    margin-left: 14px;
    padding: 0 9px 0 6px;
  }

  .hot {
    flex: 1;
    margin: 0 4px 0 8px;
    font-size: 13px;
    color: #555;
  }

  .search b {
    margin-left: 1px;
    font-size: 13px;
    font-style: italic;
    color: #dd4a42;
  }

  .tools {
    display: flex;
    align-items: center;
    margin-left: 11px;
  }

  .tools button { width: 36px; }
  .tools button:nth-of-type(4) { width: 48px; gap: 6px; }

  .rule {
    width: 1px;
    height: 18px;
    margin: 0 4px;
    background: #ddd;
  }

  .bookmarks {
    display: flex;
    align-items: center;
    height: 29px;
    padding-left: 30px;
    border-bottom: 1px solid #e4e4e6;
    font-family: 'Liberation Serif', 'Noto Sans CJK SC', serif;
  }

  .fav {
    display: flex;
    align-items: center;
    gap: 10px;
    width: 46px;
    flex: none;
  }

  .bm {
    display: flex;
    align-items: center;
    gap: 2px;
    flex: none;
  }

  .bm-list {
    display: flex;
    gap: 15px;
    margin-left: 10px;
    overflow: hidden;
  }

  .bm-text {
    width: 48px;
    overflow: hidden;
    white-space: nowrap;
  }

  .bm-text.short { width: 24px; }
  .fade { mask-image: linear-gradient(90deg, #000 30px, #0003 48px); }
  .more { font-size: 15px; }

  .content {
    flex: 1;
    display: flex;
    background: #fff;
  }

  .article {
    flex: 1;
    padding: 14px 0 0 69px;
    background: #ededf0;
    font-size: 16px;
    font-weight: 300;
    text-spacing-trim: space-all;
    color: #47546a;
  }

  .article p {
    margin: 0 0 1px;
    line-height: 44px;
    white-space: nowrap;
  }

  .hatch {
    width: 225px;
    background: repeating-linear-gradient(135deg, #fff 0 3px, #f7f6f8 3px 4px);
  }

  .scroll {
    display: flex;
    flex-direction: column;
    justify-content: space-between;
    align-items: center;
    width: 16px;
    height: 300px;
    padding-top: 6px;
    background: #efeff1;
  }

  .up {
    border: 4px solid transparent;
    border-top: 0;
    border-bottom: 5px solid #444;
  }

  .thumb {
    width: 12px;
    height: 200px;
    background: #bcbcbe;
  }

  /* spreadsheet window */
  .excel {
    position: absolute;
    top: 240px;
    left: -48px;
    right: -25px;
    bottom: 68px;
    display: flex;
    flex-direction: column;
    background: #e6e6e8;
    border-bottom: 1px solid #217346;
    box-shadow: 0 0 4px 1px #1c4057;
  }

  .title {
    display: grid;
    grid-template-columns: 1fr auto 1fr;
    align-items: center;
    height: 34px;
    background: #217346;
    color: #e6fff0;
  }

  .quick {
    display: flex;
    gap: 9px;
    padding-left: 53px;
  }

  .quick button { gap: 4px; }
  .quick button:last-child { margin-left: 3px; }

  h1 {
    margin: 0;
    font-size: 12px;
    font-weight: 400;
  }

  .title-right {
    display: flex;
    align-items: center;
    justify-content: flex-end;
  }

  .login {
    width: 46px;
    height: 19px;
    margin-right: 10px;
    background: #fff;
    color: #217346;
  }

  .wb {
    width: 46px;
    height: 34px;
  }

  .tabs {
    display: flex;
    gap: 1px;
    height: 31px;
    padding: 1px 24px 0 63px;
    background: #217346;
    color: #e6fff0;
  }

  .tab {
    padding: 0 13px 3px;
    height: 30px;
  }

  .tab.on {
    background: #f3f2f2;
    color: #217346;
  }

  .tell {
    gap: 13px;
    margin-left: 15px;
  }

  .share {
    gap: 4px;
    margin-left: auto;
  }

  .ribbon {
    display: flex;
    height: 94px;
    padding-top: 3px;
    border-bottom: 1px solid #c8c8ca;
    background: #f3f2f2;
  }

  .grp {
    display: flex;
    flex-direction: column;
    flex: none;
    height: 88px;
    border-right: 1px solid #b4b2b5;
  }

  .g-external { width: 290px; padding: 0 7px; }
  .g-external .items { justify-content: flex-end; }
  .g-transform { width: 159px; padding: 0 7px; }
  .g-links { width: 146px; padding: 0 7px; }
  .g-sort { width: 208px; padding: 0 8px; }
  .g-tools { width: 332px; padding: 0 7px; }
  .g-forecast { width: 110px; padding: 0 7px; }
  .g-outline { width: 187px; padding: 0 8px; }

  .items {
    display: flex;
    flex: none;
    height: 68px;
  }

  .name {
    display: flex;
    justify-content: center;
    align-items: center;
    height: 24px;
    padding-top: 3px;
    flex: none;
  }

  .g-outline .name span {
    flex: 1;
    padding-right: 12px;
    text-align: center;
  }

  .g-outline .name button { margin: 4px -3px 0 0; }

  .big {
    position: relative;
    flex-direction: column;
    justify-content: flex-start;
    min-width: 42px;
    padding: 3px 3px 0;
    line-height: 15px;
  }

  .pic {
    display: flex;
    align-items: center;
    height: 34px;
  }

  .line {
    display: flex;
    align-items: center;
    justify-content: center;
    gap: 4px;
    height: 15px;
  }

  .big.active { background: #c6c4c7; }
  .off { color: #aaa8ac; }

  .cursor {
    position: absolute;
    left: 31px;
    top: 44px;
  }

  .split {
    width: 1px;
    height: 56px;
    margin: 6px 4px 0;
    background: #d2d0d3;
  }

  .smalls {
    display: flex;
    flex-direction: column;
    margin-left: 4px;
  }

  .small {
    justify-content: flex-start;
    gap: 3px;
    height: 23px;
  }

  .az {
    display: flex;
    flex-direction: column;
    gap: 11px;
    width: 22px;
    padding-top: 9px;
  }

  .details {
    display: flex;
    flex-direction: column;
    gap: 7px;
    padding: 3px 0 0 3px;
  }

  .formula-row {
    display: flex;
    height: 38px;
    margin-top: 10px;
    padding-bottom: 10px;
  }

  .name-box,
  .fx-box,
  .formula {
    height: 28px;
    border: 1px solid #c9c9cb;
    background: #fdfdfe;
  }

  .name-box {
    display: flex;
    width: 110px;
  }

  .name-box input { flex: 1; }
  .name-box button { width: 16px; }
  .name-box .caret { border-width: 4px 4px 0; }

  .dots {
    width: 30px;
    font-size: 16px;
    line-height: 26px;
    text-align: center;
    color: #999;
  }

  .fx-box {
    display: flex;
    width: 110px;
  }

  .fx-box button { flex: 1; }

  .fx {
    font: italic bold 15px 'Liberation Serif', serif;
    color: #555;
  }

  .fx small { font-size: 12px; padding-top: 3px; }

  .formula {
    flex: 1;
    margin-left: 3px;
    padding: 0 0 8px 9px;
  }

  .sheet {
    flex: 1;
    min-height: 0;
    overflow: hidden;
    background: #fff;
  }

  table {
    width: 1544px;
    table-layout: fixed;
    border-collapse: separate;
    border-spacing: 0;
    font-family: 'Liberation Serif', 'Noto Sans CJK SC', serif;
    font-size: 15px;
    line-height: 15px;
    color: #111;
  }

  .rowhead { width: 32px; }
  .data { width: 72px; }

  thead th {
    height: 18px;
    padding: 3px 0 0;
    border-right: 1px solid #b9b9bb;
    border-bottom: 1px solid #9b9b9d;
    background: #e6e6e8;
    font-size: 13px;
    font-weight: 400;
    line-height: 14px;
    vertical-align: top;
  }

  thead th.sel {
    padding-top: 2px;
    border-bottom: 2px solid #217346;
    background: #d2d2d5;
    color: #217346;
  }

  tbody th { background: #e6e6e8; }

  td {
    height: 18px;
    padding: 2px 2px 0;
    border-right: 1px solid #d4d4d6;
    border-bottom: 1px solid #d4d4d6;
    overflow: hidden;
    white-space: nowrap;
  }

  td.sel {
    background: #c8c5c9;
    border-color: #a9a6aa;
  }

  td.first { background: #fff; }
  td.sel.edge { border-right: 2px solid #217346; }

  td.num {
    padding-right: 1px;
    font-size: 16px;
    text-align: right;
  }

  .sheet-bar {
    display: flex;
    height: 28px;
    border-top: 1px solid #98989a;
  }

  .nav-next {
    width: 103px;
    margin-top: 9px;
    height: 8px;
  }

  .nav-next::before {
    content: '';
    display: block;
    width: 0;
    margin-left: 59px;
    border: 4px solid transparent;
    border-left-color: #c0c0c2;
    border-right: 0;
  }

  .sheet-tabs {
    display: flex;
    font-size: 13px;
    color: #444;
  }

  .sheet-tabs button {
    width: 45px;
    height: 24px;
    padding-bottom: 3px;
    border-left: 1px solid #98989a;
  }

  .sheet-tabs .on {
    padding-bottom: 1px;
    border-right: 1px solid #98989a;
    border-bottom: 2px solid #217346;
    background: #fff;
    color: #217346;
  }

  .add { margin-left: 33px; }
  .sheet-bar .dots { margin-left: auto; }

  .hscroll {
    display: flex;
    width: 570px;
    height: 16px;
    margin: 5px 18px 0 0;
  }

  .hscroll button {
    width: 15px;
    border: 1px solid #ababad;
    background: #fdfdfe;
  }

  .hthumb {
    flex: 1;
    border: 1px solid #ababad;
    background: #fff;
  }

  .trough {
    width: 28px;
    background: #dcdcde;
  }

  .tri {
    flex: none;
    border: 4px solid transparent;
  }

  .tri.left { border-left: 0; border-right-color: #555; }
  .tri.right { border-right: 0; border-left-color: #555; }
  .tri.up-small { border-width: 0 3px 3px; border-bottom-color: #999; }

  .status {
    display: flex;
    align-items: center;
    justify-content: flex-end;
    gap: 17px;
    height: 21px;
    padding-right: 19px;
    border-top: 1px solid #cfcfd1;
    background: #f3f3f4;
    color: #333;
  }

  .views { display: flex; }

  .views button {
    width: 40px;
    height: 21px;
  }

  .views .on { background: #c9c9cb; }

  .zoom {
    display: flex;
    align-items: center;
    margin-left: -14px;
  }

  .zoom button {
    width: 18px;
    font-size: 15px;
  }

  input[type='range'] {
    width: 100px;
    height: 14px;
    margin: 0;
    appearance: none;
    background: linear-gradient(#999, #999) center / 100% 1px no-repeat;
  }

  input[type='range']::-webkit-slider-thumb {
    appearance: none;
    width: 5px;
    height: 12px;
    background: #666;
  }

  .pct {
    width: 32px;
    margin-left: 8px;
  }

  /* taskbar */
  .taskbar {
    position: absolute;
    left: 0;
    right: 0;
    bottom: 0;
    display: flex;
    align-items: center;
    height: 43px;
    border-top: 1px solid #f4f2ee;
    background: #d5d1cb;
    overflow: hidden;
  }

  .start {
    width: 20px;
    justify-content: flex-end;
    flex: none;
  }

  .task-search {
    display: flex;
    align-items: center;
    width: 200px;
    height: 34px;
    margin-left: 14px;
    padding-left: 4px;
    background: #efeef0;
    color: #111;
  }

  .task-search input {
    flex: 1;
    margin-left: 5px;
  }

  .task-search button {
    width: 56px;
    height: 34px;
    background: #2d8aee;
    color: #fff;
  }

  .groove {
    width: 3px;
    height: 34px;
    margin-left: 6px;
    border-left: 1px solid #fff;
    border-right: 1px solid #8a8680;
  }

  .launch { margin-left: 15px; }

  .tasks {
    display: flex;
    gap: 3px;
    margin-left: 9px;
  }

  .tasks button {
    width: 47px;
    height: 38px;
    border: 1px solid;
    border-color: #fff #55524e #55524e #fff;
    box-shadow: inset -1px -1px #9a968f;
  }

  .tasks .stack2 { border-right: 7px double #55524e; }
  .tasks .stack1 { border-right: 4px double #55524e; }

  .tasks .on {
    border-color: #55524e #fff #fff #55524e;
    box-shadow: inset 1px 1px #333;
    background: #fbfbfb;
  }

  .lang {
    display: flex;
    align-items: center;
    gap: 9px;
    margin-left: auto;
    font: 11px 'Liberation Serif', serif;
    color: #111;
  }

  .thin {
    width: 1px;
    height: 22px;
    margin: 0 -4px;
    background: #fff;
  }

  .tray {
    display: flex;
    align-items: center;
    gap: 6px;
    width: 291px;
    height: 38px;
    margin-left: 2px;
    padding-left: 6px;
    border: 1px solid;
    border-color: #8a8680 transparent #fff #8a8680;
    overflow: hidden;
  }

  .clock {
    display: flex;
    flex-direction: column;
    margin-left: 2px;
    font: 12px/13px 'Liberation Serif', 'Noto Sans CJK SC', serif;
    color: #111;
    white-space: nowrap;
  }

  .clock span + span { margin-left: 2px; }
</style>
